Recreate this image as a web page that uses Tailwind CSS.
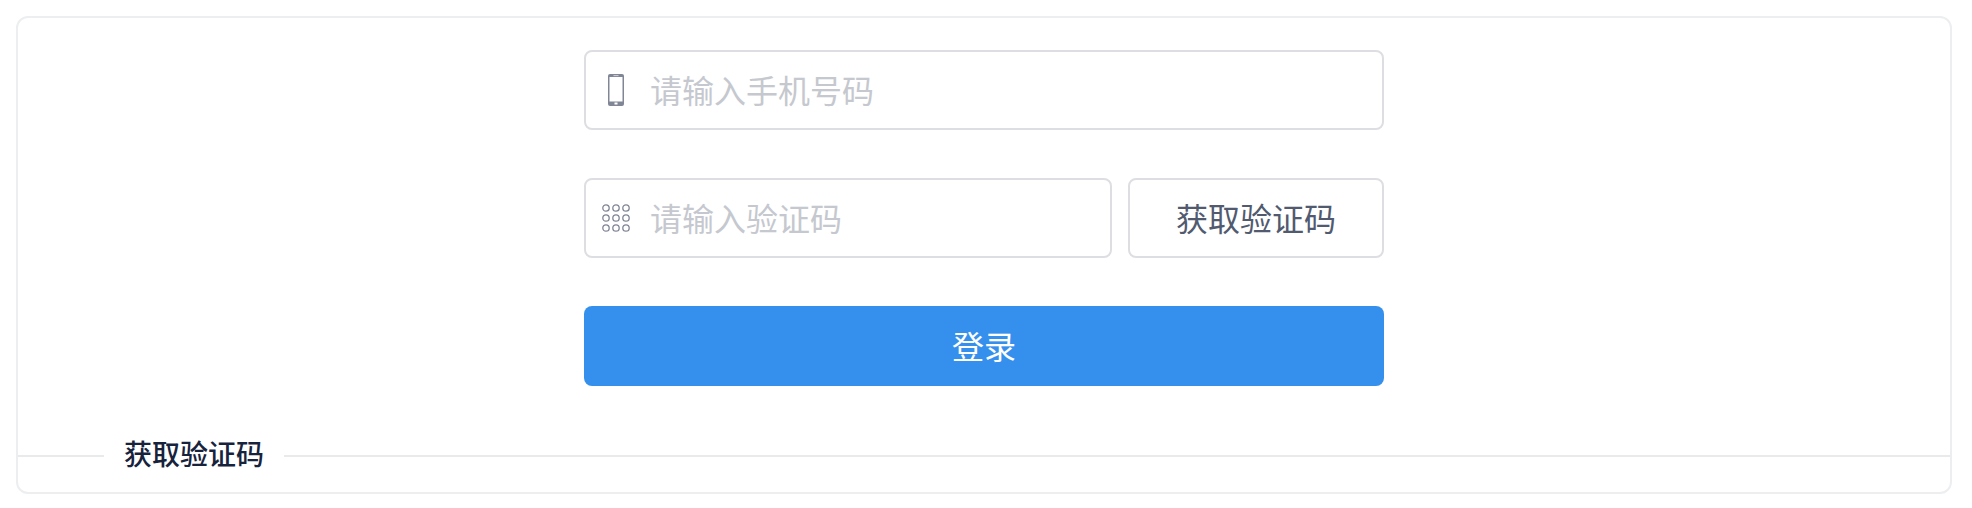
<!DOCTYPE html>
<html lang="zh">
<head>
<meta charset="utf-8">
<script src="https://cdn.jsdelivr.net/npm/@tailwindcss/browser@4"></script>
</head>
<body class="bg-white font-['Noto_Sans_CJK_SC','Noto_Sans',sans-serif]">
<div class="pt-4 pl-4 pr-5">
  <div class="h-[478px] border-2 border-[#eceef0] rounded-xl overflow-hidden flex flex-col">
    <form class="w-[800px] mx-auto mt-8 flex flex-col gap-12 shrink-0">
      <label class="h-20 flex items-center border-2 border-[#dcdee2] rounded-lg">
        <span class="w-[64px] shrink-0 flex justify-center pr-[4px]">
          <svg width="16" height="32" viewBox="0 0 16 32" fill="none">
            <rect x="0" y="0" width="16" height="32" rx="2" fill="#808695"/>
            <rect x="1.5" y="3" width="13" height="24.5" fill="#fff"/>
            <rect x="6.5" y="28.5" width="3" height="2" fill="#fff"/>
            <rect x="5.5" y="1.2" width="5" height="0.9" fill="#fff" opacity=".7"/>
          </svg>
        </span>
        <input type="text" placeholder="请输入手机号码" class="flex-1 min-w-0 h-full pb-[3px] bg-transparent outline-none text-[32px] text-[#515a6e] placeholder:text-[#c5c8ce]">
      </label>
      <div class="flex gap-4">
        <label class="w-[528px] h-20 flex items-center border-2 border-[#dcdee2] rounded-lg">
          <span class="w-[64px] shrink-0 flex justify-center pr-[5px]">
            <svg width="28" height="28" viewBox="0 0 28 28" fill="none" stroke="#808695" stroke-width="1.3">
              <circle cx="4" cy="4" r="3.2"/><circle cx="14" cy="4" r="3.2"/><circle cx="24" cy="4" r="3.2"/>
              <circle cx="4" cy="14" r="3.2"/><circle cx="14" cy="14" r="3.2"/><circle cx="24" cy="14" r="3.2"/>
              <circle cx="4" cy="24" r="3.2"/><circle cx="14" cy="24" r="3.2"/><circle cx="24" cy="24" r="3.2"/>
            </svg>
          </span>
          <input type="text" placeholder="请输入验证码" class="flex-1 min-w-0 h-full pb-[3px] bg-transparent outline-none text-[32px] text-[#515a6e] placeholder:text-[#c5c8ce]">
        </label>
        <button type="button" class="flex-1 h-20 pb-[3px] border-2 border-[#dcdee2] rounded-lg bg-white text-[32px] text-[#515a6e]">获取验证码</button>
      </div>
      <button type="button" class="h-20 pb-[3px] rounded-lg bg-[#3590ed] text-white text-[32px]">登录</button>
    </form>
    <div class="mt-[48px] h-11 flex items-center">
      <div class="w-[86px] h-[2px] bg-[#e8eaec]"></div>
      <span class="px-5 pb-[7px] text-[28px] leading-none font-medium text-[#17233d]">获取验证码</span>
      <div class="flex-1 h-[2px] bg-[#e8eaec]"></div>
    </div>
  </div>
</div>
</body>
</html>
